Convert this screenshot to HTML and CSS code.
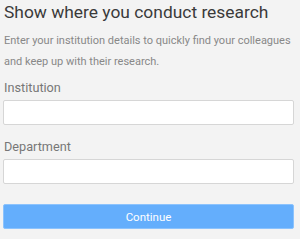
FILE: index.html
```html
<!DOCTYPE html>
<html lang="en">
<head>
    <meta charset="UTF-8">
    <meta name="viewport" content="width=device-width, initial-scale=1.0">
    <title>Show where you conduct research</title>
    <link rel="stylesheet" href="styles.css">
</head>
<body>
    <div class="panel">
        <h1>Show where you conduct research</h1>
        <p class="intro">Enter your institution details to quickly find your colleagues and keep up with their research.</p>

        <div class="field">
            <label for="institution">Institution</label>
            <input type="text" id="institution">
        </div>
        <div class="field">
            <label for="department">Department</label>
            <input type="text" id="department">
        </div>

        <button class="continue">Continue</button>
    </div>
</body>
</html>
```

FILE: styles.css
```css
body {
    font-family: Roboto, "Liberation Sans", sans-serif;
    background: #f3f3f3;
    margin: 0;
}
.panel {
    padding: 1px 6px 0 3px;
}
h1 {
    font-size: 17.4px;
    font-weight: 400;
    color: #3a3a3a;
    margin: 0 0 0 1px;
    line-height: 22px;
}
.intro {
    font-size: 11px;
    color: #888;
    line-height: 21px;
    margin: 7px -6px 0 1px;
}
.field {
    margin-top: 7px;
}
.field + .field {
    margin-top: 13px;
}
label {
    display: block;
    font-size: 12.7px;
    color: #777;
    margin: 0 0 3px 1px;
    line-height: 18px;
}
input[type="text"] {
    display: block;
    box-sizing: border-box;
    width: 100%;
    height: 25px;
    border: 1px solid #d6d6d6;
    border-radius: 2px;
    background: #fff;
    margin: 0;
}
.continue {
    display: block;
    box-sizing: border-box;
    width: 100%;
    height: 25px;
    margin-top: 20px;
    border: 1px solid #8cc3fd;
    border-radius: 2px;
    background: #64aefc;
    color: #fff;
    font-family: Roboto, "Liberation Sans", sans-serif;
    font-size: 11.5px;
    cursor: pointer;
}
```
